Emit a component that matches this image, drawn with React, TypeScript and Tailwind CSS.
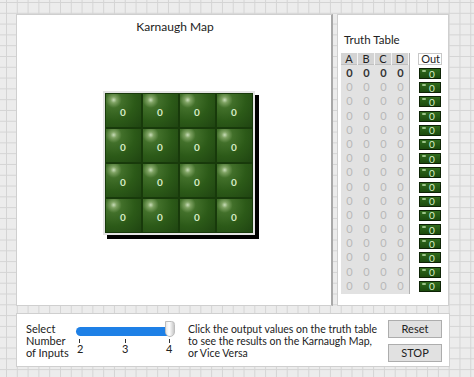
import React from 'react';

const font = { fontFamily: 'Lato, "Noto Sans", sans-serif' };

const KMapCell = () => (
  <div className="relative flex items-end justify-center pb-[10px] border border-[#183a0b] bg-[radial-gradient(circle_at_22%_18%,#c8dcb8_0px,#7ea262_3px,#42702a_8px,#2c5a18_55%,#1f4411_100%)]">
    <span className="text-[10px] font-bold text-[#d6ecc6] leading-none">0</span>
  </div>
);

const Led = () => (
  <div className="relative h-[11px] w-[22px] border border-[#0d2205] bg-[linear-gradient(#2f6a1c,#1c4a0e)] flex items-center justify-center">
    <span className="absolute left-[2px] top-[1px] w-[4px] h-[2px] bg-[#9cc488] rounded-full" />
    <span className="text-[10px] leading-none text-[#d8f0c8] ml-[4px]">0</span>
  </div>
);

const App = () => {
  const rows = Array.from({ length: 16 });

  return (
    <div
      style={font}
      className="w-[474px] h-[377px] overflow-hidden bg-[#ececec] bg-[linear-gradient(#d4d4d4_1px,transparent_1px),linear-gradient(90deg,#d4d4d4_1px,transparent_1px)] bg-[size:10.8px_10.8px] bg-[position:6px_2px] pt-[14px] pl-[16px] text-[#222]"
    >
      <div className="flex h-[292px] gap-[4px]">
        {/* Karnaugh map panel */}
        <div className="w-[317px] bg-white border border-[#cfcfcf] border-r-2 border-r-[#a8a8a8] flex flex-col items-center">
          <div className="mt-[5px] ml-[2px] text-[12px] leading-[14px]">Karnaugh Map</div>
          <div className="mt-[57px] ml-[9px] border-2 border-[#e4e4e4] shadow-[4px_4px_0_#000]">
            <div className="grid grid-cols-4 grid-rows-4 w-[148px] h-[140px]">
              {Array.from({ length: 16 }).map((_, i) => (
                <KMapCell key={i} />
              ))}
            </div>
          </div>
        </div>

        {/* Truth table panel */}
        <div className="w-[112px] bg-white border border-[#cfcfcf] pl-[3px] pt-[18px]">
          <div className="text-[11.5px] leading-[14px] pl-[3px]">Truth Table</div>
          <div className="flex mt-[6px]">
            <div className="w-[69px] h-[241px] bg-[#e2e2e2] border-r border-[#b0b0b0]">
              <div className="grid grid-cols-4 h-[12px] bg-[#d4d4d4] border-b border-[#c0c0c0]">
                {['A', 'B', 'C', 'D'].map((h) => (
                  <div key={h} className="text-[11px] leading-[12px] text-center border-r border-[#f4f4f4]">
                    {h}
                  </div>
                ))}
              </div>
              <div className="pt-[1px]">
                {rows.map((_, i) => (
                  <div key={i} className="grid grid-cols-4 h-[14.2px]">
                    {[0, 1, 2, 3].map((c) => (
                      <div
                        key={c}
                        className={`text-[11px] leading-[14px] text-center ${i === 0 ? 'font-bold text-[#333]' : 'text-[#b8b8b8]'}`}
                      >
                        0
                      </div>
                    ))}
                  </div>
                ))}
              </div>
            </div>
            <div className="ml-[8px] w-[24px]">
              <div className="h-[12px] border border-[#c8c8c8] text-[11px] leading-[10px] text-right pr-[1px]">Out</div>
              <div className="flex flex-col gap-[3.2px] mt-[3px] pl-[1px]">
                {rows.map((_, i) => (
                  <Led key={i} />
                ))}
              </div>
            </div>
          </div>
        </div>
      </div>

      {/* Bottom control panel */}
      <div className="mt-[7px] w-[434px] h-[54px] bg-white border border-[#cfcfcf] flex items-start">
        <div className="ml-[9px] mt-[9px] w-[46px] text-[11px] leading-[12px] whitespace-nowrap">
          <div>Select</div>
          <div>Number</div>
          <div>of Inputs</div>
        </div>
        <div className="ml-[4px] mt-[7px] w-[100px]">
          <div className="relative h-[18px]">
            <div className="absolute left-0 top-[6px] w-[96px] h-[9px] rounded-full bg-[#1e80e6]" />
            <div className="absolute left-[89px] top-[0px] w-[10px] h-[16px] rounded-b-[6px] rounded-tr-[4px] bg-[linear-gradient(90deg,#e8e8e8,#ffffff_40%,#c8c8c8)] border border-[#bdbdbd]" />
          </div>
          <div className="relative h-[16px] text-[11px] leading-[12px]">
            <span className="absolute left-[3px] top-[0px] w-px h-[4px] bg-[#333]" />
            <span className="absolute left-[49px] top-[0px] w-px h-[4px] bg-[#333]" />
            <span className="absolute left-[93px] top-[0px] w-px h-[4px] bg-[#333]" />
            <span className="absolute left-[1px] top-[4px]">2</span>
            <span className="absolute left-[46px] top-[4px]">3</span>
            <span className="absolute left-[90px] top-[4px]">4</span>
          </div>
        </div>
        <div className="ml-[12px] mt-[9px] text-[10.5px] leading-[12px] w-[196px] whitespace-nowrap">
          <div>Click the output values on the truth table</div>
          <div>to see the results on the Karnaugh Map,</div>
          <div>or Vice Versa</div>
        </div>
        <div className="ml-[4px] mt-[6px] flex flex-col gap-[6px]">
          <button className="w-[54px] h-[18px] bg-[#e1e1e1] border border-[#adadad] text-[11px] leading-[16px]">Reset</button>
          <button className="w-[54px] h-[18px] bg-[#e1e1e1] border border-[#adadad] text-[11px] leading-[16px]">STOP</button>
        </div>
      </div>
    </div>
  );
};

export default App;
